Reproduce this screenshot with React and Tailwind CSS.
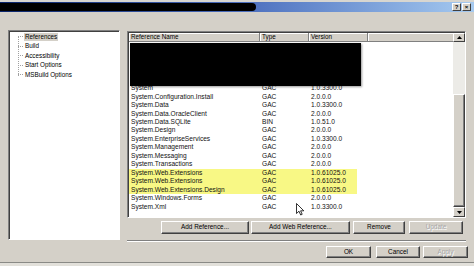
import React from 'react';

const rows = [
  ['System', 'GAC', '1.0.3300.0'],
  ['System.Configuration.Install', 'GAC', '2.0.0.0'],
  ['System.Data', 'GAC', '1.0.3300.0'],
  ['System.Data.OracleClient', 'GAC', '2.0.0.0'],
  ['System.Data.SQLite', 'BIN', '1.0.51.0'],
  ['System.Design', 'GAC', '2.0.0.0'],
  ['System.EnterpriseServices', 'GAC', '1.0.3300.0'],
  ['System.Management', 'GAC', '2.0.0.0'],
  ['System.Messaging', 'GAC', '2.0.0.0'],
  ['System.Transactions', 'GAC', '2.0.0.0'],
  ['System.Web.Extensions', 'GAC', '1.0.61025.0', true],
  ['System.Web.Extensions', 'GAC', '1.0.61025.0', true],
  ['System.Web.Extensions.Design', 'GAC', '1.0.61025.0', true],
  ['System.Windows.Forms', 'GAC', '2.0.0.0'],
  ['System.Xml', 'GAC', '1.0.3300.0'],
];

const treeItems = ['References', 'Build', 'Accessibility', 'Start Options', 'MSBuild Options'];

function Btn({ children, w, disabled, h = 'h-[13px]' }) {
  return (
    <div
      className={`${w} ${h} flex items-center justify-center bg-[#d4d0c8] border border-t-white border-l-white border-r-[#404040] border-b-[#404040] shadow-[inset_-1px_-1px_0_#808080] text-[6.4px] leading-none ${
        disabled ? 'text-[#a8a8a8] [text-shadow:1px_1px_0_#fff]' : 'text-black'
      }`}
    >
      {children}
    </div>
  );
}

function HeaderCell({ w, children }) {
  return (
    <div
      className={`${w} h-full flex items-center pl-[2px] border-r border-r-[#808080] shadow-[inset_1px_1px_0_#fff] text-[6.3px] leading-none text-black`}
    >
      {children}
    </div>
  );
}

export default function App() {
  return (
    <div className="w-[474px] h-[266px] bg-[#d4d0c8] flex flex-col overflow-hidden relative font-['Liberation_Sans',Arial,sans-serif]">
      {/* title bar */}
      <div className="h-[2px] bg-[#d8d6d0]" />
      <div className="h-[10px] relative bg-gradient-to-r from-[#0a246a] via-[#4a6cbc] to-[#a6caf0] flex items-center justify-end pr-[3px] gap-[1px]">
        <div className="absolute left-0 top-[1px] w-[256px] h-[8px] bg-black rounded-r-full" />
        <div className="w-[9px] h-[8px] bg-[#d4d0c8] border border-t-white border-l-white border-r-[#404040] border-b-[#404040] flex items-center justify-center text-[6px] font-bold leading-none text-black">?</div>
        <div className="w-[9px] h-[8px] bg-[#d4d0c8] border border-t-white border-l-white border-r-[#404040] border-b-[#404040] flex items-center justify-center text-[6px] font-bold leading-none text-black">×</div>
      </div>

      {/* body */}
      <div className="flex flex-row pl-[8px] pt-[18px] gap-[7px]">
        {/* tree */}
        <div className="w-[112px] h-[210px] bg-white border border-t-[#808080] border-l-[#808080] border-b-white border-r-white shadow-[inset_1px_1px_0_#404040] pt-[1px] pl-[9px] relative">
          <div className="absolute left-[9px] top-[6px] h-[39px] border-l border-dotted border-[#a0a0a0]" />
          {treeItems.map((t, i) => (
            <div key={t} className="h-[9.5px] flex items-center">
              <div className="w-[5px] border-t border-dotted border-[#a0a0a0]" />
              <span
                className={`ml-[1px] px-[1px] text-[6.3px] leading-[8px] text-black ${
                  i === 0 ? 'bg-[#d4d0c8]' : ''
                }`}
              >
                {t}
              </span>
            </div>
          ))}
        </div>

        {/* right column */}
        <div className="w-[339px] mt-[1px] flex flex-col">
          <div className="h-[187px] bg-white border border-t-[#808080] border-l-[#808080] border-b-white border-r-white shadow-[inset_1px_1px_0_#404040] flex flex-row pl-[1px] pt-[1px]">
            <div className="flex-1 flex flex-col relative">
              <div className="h-[9px] flex flex-row bg-[#d4d0c8] border-b border-b-[#808080]">
                <HeaderCell w="w-[131px]">Reference Name</HeaderCell>
                <HeaderCell w="w-[49px]">Type</HeaderCell>
                <HeaderCell w="w-[59px]">Version</HeaderCell>
                <div className="flex-1 h-full shadow-[inset_1px_1px_0_#fff]" />
              </div>
              {[0, 1, 2, 3, 4].map((i) => (
                <div key={'b' + i} className="h-[8.46px]" />
              ))}
              {rows.map(([n, t, v, hl], i) => (
                <div key={i} className="h-[8.46px] flex flex-row items-center text-[6.6px] leading-none text-[#111]">
                  <div className={`w-[228px] h-full flex flex-row items-center ${hl ? 'bg-[#f8f885]' : ''}`}>
                    <span className="w-[133px] pl-[2px] whitespace-nowrap">{n}</span>
                    <span className="w-[49px] whitespace-nowrap">{t}</span>
                    <span className="whitespace-nowrap">{v}</span>
                  </div>
                </div>
              ))}
              <div className="absolute left-[1px] top-[10px] w-[231px] h-[43px] bg-black shadow-[1px_1px_2px_rgba(0,0,0,0.4)]" />
            </div>

            {/* scrollbar */}
            <div className="w-[12px] h-full flex flex-col">
              <div className="h-[9px] bg-[#d4d0c8] border border-t-white border-l-white border-r-[#404040] border-b-[#404040] flex items-center justify-center">
                <svg width="5" height="3" viewBox="0 0 5 3"><path d="M2.5 0 L5 3 L0 3 Z" fill="#000" /></svg>
              </div>
              <div className="h-[52px] bg-[#ecebe7]" />
              <div className="flex-1 bg-[#d4d0c8] border border-t-white border-l-white border-r-[#404040] border-b-[#404040] shadow-[inset_-1px_-1px_0_#808080]" />
              <div className="h-[10px] bg-[#d4d0c8] border border-t-white border-l-white border-r-[#404040] border-b-[#404040] flex items-center justify-center">
                <svg width="5" height="3" viewBox="0 0 5 3"><path d="M0 0 L5 0 L2.5 3 Z" fill="#000" /></svg>
              </div>
            </div>
          </div>

          {/* list buttons */}
          <div className="h-[13px] mt-[3px] flex flex-row pl-[34px]">
            <Btn w="w-[88px]">Add Reference...</Btn>
            <div className="w-[2px]" />
            <Btn w="w-[99px]">Add Web Reference...</Btn>
            <div className="w-[3px]" />
            <Btn w="w-[52px]">Remove</Btn>
            <div className="w-[4px]" />
            <Btn w="w-[54px]" disabled>Update</Btn>
          </div>

          <div className="mt-[6px] h-[2px] border-t border-t-[#808080] border-b border-b-white" />
        </div>
      </div>

      {/* dialog buttons */}
      <div className="mt-[4px] h-[12px] flex flex-row justify-end pr-[6px]">
        <Btn w="w-[45px]" h="h-[12px]">OK</Btn>
        <div className="w-[5px]" />
        <Btn w="w-[44px]" h="h-[12px]">Cancel</Btn>
        <div className="w-[3px]" />
        <Btn w="w-[45px]" h="h-[12px]" disabled>Apply</Btn>
      </div>

      <div className="mt-[4px] border-t border-t-[#8a8a86] flex-1 bg-[#e2e0da]" />

      {/* mouse cursor */}
      <svg className="absolute left-[296px] top-[203px]" width="9" height="13" viewBox="0 0 9 13">
        <path d="M0.5 0.5 L0.5 10.5 L3 8.2 L4.7 12 L6.2 11.3 L4.6 7.8 L7.8 7.8 Z" fill="#fff" stroke="#000" strokeWidth="0.8" />
      </svg>
    </div>
  );
}
